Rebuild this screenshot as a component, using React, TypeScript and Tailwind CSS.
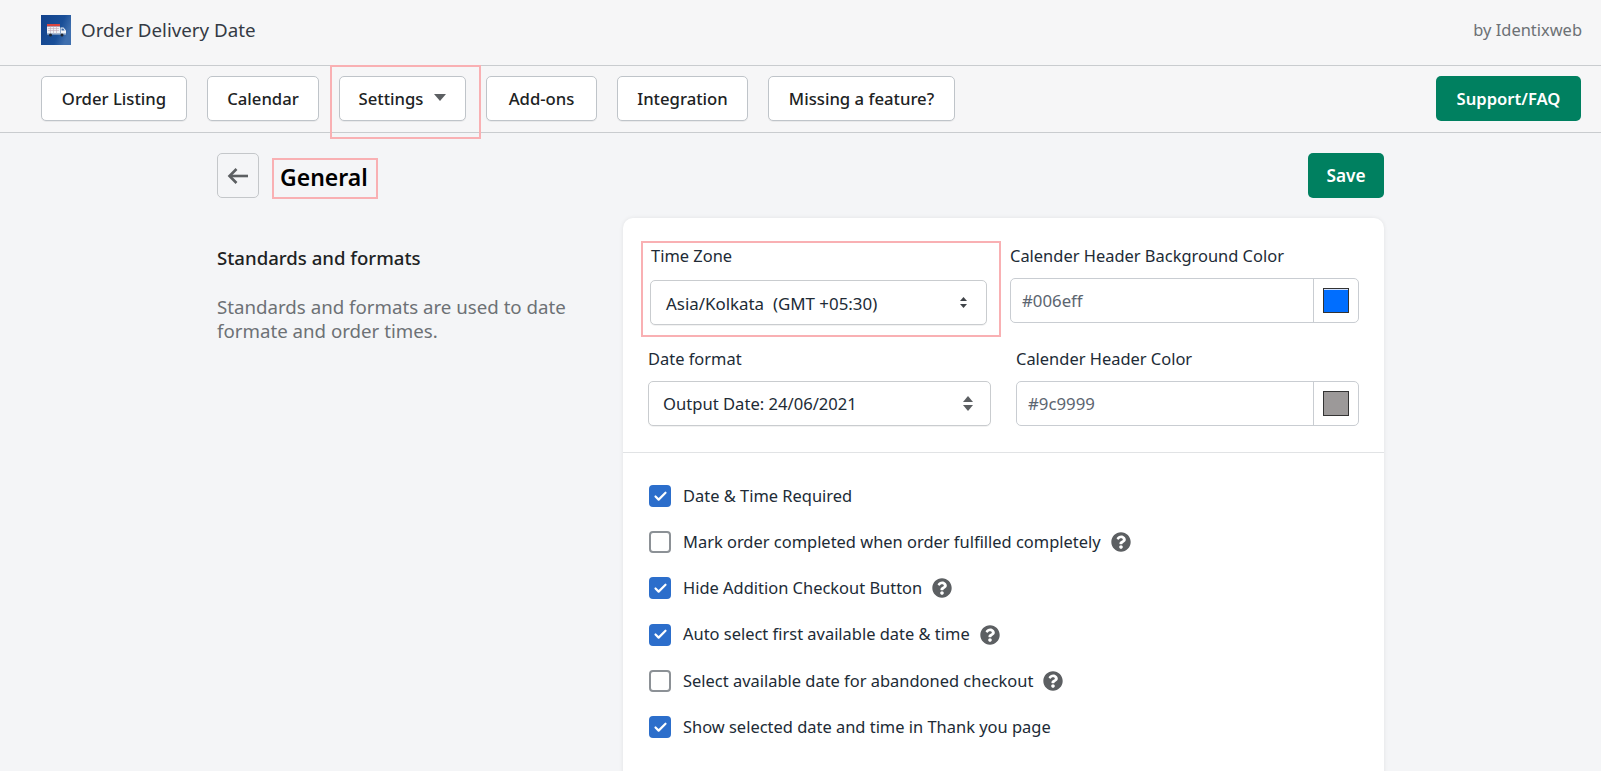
import { Check } from "lucide-react"
import { FaQuestionCircle } from "react-icons/fa"

const navItems = [
  { label: "Order Listing", width: "w-[146px]" },
  { label: "Calendar", width: "w-[112px]" },
]
const navItemsRight = [
  { label: "Add-ons", width: "w-[111px]" },
  { label: "Integration", width: "w-[131px]" },
  { label: "Missing a feature?", width: "w-[187px]" },
]

const options = [
  { label: "Date & Time Required", checked: true, help: false },
  { label: "Mark order completed when order fulfilled completely", checked: false, help: true },
  { label: "Hide Addition Checkout Button", checked: true, help: true },
  { label: "Auto select first available date & time", checked: true, help: true },
  { label: "Select available date for abandoned checkout", checked: false, help: true },
  { label: "Show selected date and time in Thank you page", checked: true, help: false },
]

function Logo() {
  return (
    <svg width="30" height="30" viewBox="0 0 30 30" className="shrink-0">
      <defs>
        <linearGradient id="logoBg" x1="0" y1="0" x2="1" y2="0.4">
          <stop offset="0" stopColor="#12428c" />
          <stop offset="0.7" stopColor="#1a4f98" />
          <stop offset="1" stopColor="#3f6fae" />
        </linearGradient>
      </defs>
      <rect width="30" height="30" fill="url(#logoBg)" />
      <rect x="6" y="9" width="13" height="2.5" fill="#d9443f" />
      <rect x="6" y="11.5" width="13" height="7" fill="#eef1f6" />
      <path d="M7 13.5h11M7 15.5h11M9.5 11.5v7M12.5 11.5v7M15.5 11.5v7" stroke="#c3a9b8" strokeWidth="0.6" />
      <path d="M19.5 12.5h3l2.5 3v3h-5.5z" fill="#f3f5f8" />
      <path d="M20.5 13.5h1.8l1.4 2h-3.2z" fill="#3c6cab" />
      <rect x="6" y="18.5" width="19" height="1" fill="#c9cfd9" />
      <circle cx="9.5" cy="20" r="1.5" fill="#1c2430" />
      <circle cx="21" cy="20" r="1.5" fill="#1c2430" />
    </svg>
  )
}

function SelectBox({ text, className, small }: { text: string; className: string; small?: boolean }) {
  return (
    <div className={`flex h-[45px] items-center justify-between rounded-[5px] border border-[#c9cccf] bg-white text-[#212b36] shadow-[0_1px_0_rgba(0,0,0,0.05)] ${small ? "pl-[15px] pr-[19px]" : "pl-[14px] pr-[17px]"} ${className}`}>
      <span className="mt-[2px] whitespace-pre">{text}</span>
      {small ? (
        <svg width="7" height="11" viewBox="0 0 7 11" fill="#3f4348">
          <path d="M3.5 0 7 4H0z" />
          <path d="M3.5 11 0 7h7z" />
        </svg>
      ) : (
        <svg width="10" height="15" viewBox="0 0 10 15" fill="#5c5f62">
          <path d="M5 0 10 6H0z" />
          <path d="M5 15 0 9h10z" />
        </svg>
      )}
    </div>
  )
}

function ColorField({ value, swatch, className }: { value: string; swatch: string; className: string }) {
  return (
    <div className={`flex h-[45px] rounded-[5px] border border-[#c9cdd2] bg-white ${className}`}>
      <div className="flex flex-1 items-center pl-[11px] text-[16.8px] text-[#5c6570]">{value}</div>
      <div className="flex w-[45px] items-center justify-center border-l border-[#c9cdd2]">
        <span className={`h-[25px] w-[26px] border border-[#333] ${swatch}`} />
      </div>
    </div>
  )
}

export default function App() {
  return (
    <div className="h-[771px] w-full overflow-hidden bg-[#f4f5f7] text-[16.45px] text-[#212b36] [font-family:'Noto_Sans',sans-serif]">
      {/* Title bar */}
      <header className="flex h-[66px] items-center justify-between border-b border-[#c9cccf] bg-[#f6f6f7] pb-[5px] pl-[41px] pr-[19px]">
        <div className="flex items-center gap-[10px]">
          <Logo />
          <span className="mt-[1px] text-[18.77px] text-[#343a44]">Order Delivery Date</span>
        </div>
        <span className="mt-[1px] text-[#6d7175]">by Identixweb</span>
      </header>

      {/* Nav */}
      <nav className="flex h-[67px] items-center justify-between border-b border-[#c9cccf] bg-[#f6f6f7] pb-[2px] pl-[41px] pr-[20px] text-[16.7px]">
        <div className="flex items-center gap-5">
          {navItems.map((item) => (
            <button key={item.label} className={`h-[45px] rounded-[5px] border border-[#bfc4c9] bg-white pt-[2px] font-medium text-[#202223] shadow-[0_1px_0_rgba(0,0,0,0.05)] ${item.width}`}>
              {item.label}
            </button>
          ))}
          <div className="relative">
            <button className="flex h-[45px] w-[127px] items-center justify-center gap-[11px] rounded-[5px] border border-[#bfc4c9] bg-white pt-[2px] font-medium text-[#202223] shadow-[0_1px_0_rgba(0,0,0,0.05)]">
              Settings
              <svg width="12" height="7" viewBox="0 0 12 7" fill="#5c5f62" className="-mt-[3px]">
                <path d="M0 0h12L6 7z" />
              </svg>
            </button>
            <span className="absolute -top-[11px] -left-[9px] h-[74px] w-[151px] border-2 border-[#f9b0b3]" />
          </div>
          {navItemsRight.map((item) => (
            <button key={item.label} className={`h-[45px] rounded-[5px] border border-[#bfc4c9] bg-white pt-[2px] font-medium text-[#202223] shadow-[0_1px_0_rgba(0,0,0,0.05)] ${item.width}`}>
              {item.label}
            </button>
          ))}
        </div>
        <button className="h-[45px] w-[145px] rounded-[5px] bg-[#008060] pt-[2px] text-[16.6px] font-semibold text-white">Support/FAQ</button>
      </nav>

      <main className="ml-[217px] w-[1167px]">
        <div className="flex h-[85px] items-start justify-between pt-[20px]">
          <div className="flex items-center gap-[21px]">
            <button className="flex h-[45px] w-[42px] items-center justify-center rounded-[5px] border border-[#c4c7ca]">
              <svg width="22" height="18" viewBox="0 0 22 18" fill="none" stroke="#5c5f62" strokeWidth="2.6">
                <path d="M21 9H3" />
                <path d="M9.5 2 2.5 9l7 7" />
              </svg>
            </button>
            <div className="relative mt-[4px] text-[23px] font-semibold text-black">
              General
              <span className="absolute -top-[2px] -bottom-[4px] -left-[8px] -right-[10px] border-2 border-[#f9b0b3]" />
            </div>
          </div>
          <button className="h-[45px] w-[76px] rounded-[5px] bg-[#008060] text-[17.3px] font-semibold text-white">Save</button>
        </div>

        <div className="flex items-start">
          <section className="w-[406px] pt-[26px]">
            <h2 className="text-[18.6px] font-medium text-[#202223]">Standards and formats</h2>
            <p className="mt-[23px] w-[370px] text-[18.7px] leading-[24px] text-[#6d7175]">
              Standards and formats are used to date formate and order times.
            </p>
          </section>

          <section className="h-[600px] w-[761px] rounded-[10px] bg-white shadow-[0_0_4px_rgba(23,24,24,0.08)]">
            <div className="border-b border-[#e1e3e5] pb-[26px]">
              <div className="flex pl-[18px] pr-[25px] pt-[23px]">
                <div className="relative h-[96px] w-[360px] pl-[10px] pt-[3px]">
                  <span className="absolute inset-0 border-2 border-[#f9b0b3]" />
                  <div className="h-[36px]">Time Zone</div>
                  <SelectBox text="Asia/Kolkata  (GMT +05:30)" className="-ml-px w-[337px] text-[16.9px]" small />
                </div>
                <div className="ml-[9px] flex-1">
                  <div className="h-[37px] pt-[3px]">Calender Header Background Color</div>
                  <ColorField value="#006eff" swatch="bg-[#006eff] shadow-[inset_0_1px_0_#cfe0ff]" className="w-[349px]" />
                </div>
              </div>
              <div className="flex gap-[25px] pl-[25px] pr-[25px] pt-[9px]">
                <div>
                  <div className="h-[35px] leading-[26px]">Date format</div>
                  <SelectBox text="Output Date: 24/06/2021" className="w-[343px] text-[16.6px]" />
                </div>
                <div>
                  <div className="h-[35px] leading-[26px]">Calender Header Color</div>
                  <ColorField value="#9c9999" swatch="bg-[#9c9999]" className="w-[343px]" />
                </div>
              </div>
            </div>

            <ul className="pl-[26px] pt-[20px]">
              {options.map((opt) => (
                <li key={opt.label} className="flex h-[46.2px] items-center gap-[12px]">
                  {opt.checked ? (
                    <span className="flex size-[22px] items-center justify-center rounded-[4px] bg-[#2c6ecb]">
                      <Check size={15} strokeWidth={3.5} className="text-white" />
                    </span>
                  ) : (
                    <span className="size-[22px] rounded-[4px] border-2 border-[#8c9196] bg-white" />
                  )}
                  <span>{opt.label}</span>
                  {opt.help && <FaQuestionCircle size={20} className="-ml-[2px] text-[#5c5f62]" />}
                </li>
              ))}
            </ul>
          </section>
        </div>
      </main>
    </div>
  )
}
